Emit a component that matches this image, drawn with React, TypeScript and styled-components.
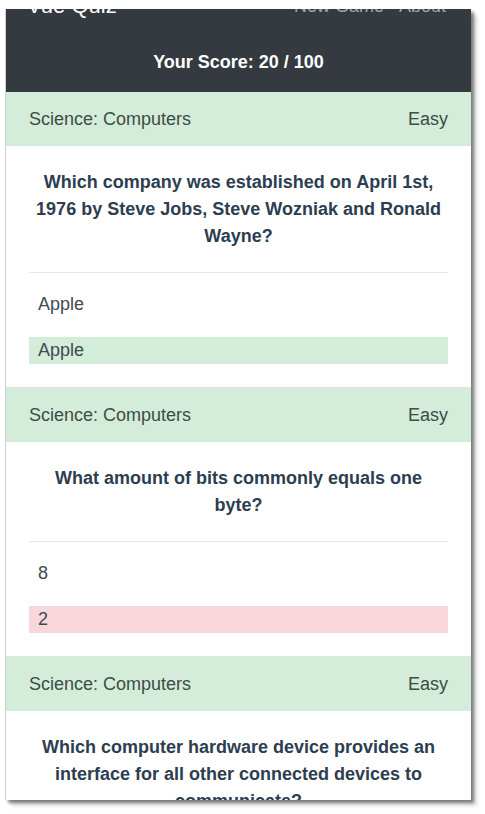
import React from "react";
import styled, { createGlobalStyle } from "styled-components";

const GlobalStyle = createGlobalStyle`
  html, body {
    margin: 0;
    padding: 0;
    background: #ffffff;
    font-family: "Liberation Sans", Arial, sans-serif;
  }
`;

const Page = styled.div`
  width: 485px;
  height: 814px;
  overflow: hidden;
  padding: 9px 0 0 5px;
  box-sizing: border-box;
`;

const Frame = styled.div`
  width: 466px;
  height: 791px;
  overflow: hidden;
  box-sizing: border-box;
  border-left: 1px solid #cfcfcf;
  background: #fff;
  box-shadow: 3px 3px 3px rgba(0, 0, 0, 0.45), 6px 6px 4px rgba(0, 0, 0, 0.12);
  color: #2c3e50;
`;

const Nav = styled.header`
  margin-top: -25px;
  background: #343a40;
`;

const NavRow = styled.div`
  height: 44px;
  display: flex;
  align-items: center;
  justify-content: space-between;
  padding: 0 25px 0 21px;
`;

const Brand = styled.span`
  color: #fff;
  font-size: 22px;
`;

const NavLinks = styled.nav`
  display: flex;
  gap: 15px;
`;

const NavLink = styled.span`
  color: rgba(255, 255, 255, 0.55);
  font-size: 18px;
`;

const Score = styled.div`
  padding: 22px 0 18px;
  line-height: 24px;
  text-align: center;
  color: #fff;
  font-weight: bold;
  font-size: 18px;
`;

const Card = styled.section`
  border-bottom: 1px solid #e2e2e2;
`;

const CardHeader = styled.div`
  height: 54px;
  display: flex;
  align-items: center;
  justify-content: space-between;
  padding: 0 23px 0 23px;
  background: #d4edda;
  color: #3d4c45;
  font-size: 18px;
`;

const CardBody = styled.div`
  padding: 23px 23px 23px;
`;

const Question = styled.h2`
  margin: 0;
  padding: 0 5px;
  text-align: center;
  font-size: 18px;
  line-height: 27px;
  font-weight: bold;
  color: #2c3e50;
`;

const Rule = styled.hr`
  margin: 22px 0 18px;
  border: 0;
  border-top: 1px solid #e6e6e6;
`;

const Answers = styled.div`
  display: flex;
  flex-direction: column;
  gap: 19px;
`;

const Answer = styled.div<{ $tone?: "right" | "wrong" }>`
  height: 27px;
  line-height: 27px;
  padding-left: 9px;
  font-size: 18px;
  color: #3d4a52;
  background: ${(p) =>
    p.$tone === "right" ? "#d4edda" : p.$tone === "wrong" ? "#f8d7da" : "transparent"};
`;

type Item = {
  category: string;
  difficulty: string;
  question: string;
  correct: string;
  given: string;
};

const items: Item[] = [
  {
    category: "Science: Computers",
    difficulty: "Easy",
    question: "Which company was established on April 1st, 1976 by Steve Jobs, Steve Wozniak and Ronald Wayne?",
    correct: "Apple",
    given: "Apple",
  },
  {
    category: "Science: Computers",
    difficulty: "Easy",
    question: "What amount of bits commonly equals one byte?",
    correct: "8",
    given: "2",
  },
  {
    category: "Science: Computers",
    difficulty: "Easy",
    question: "Which computer hardware device provides an interface for all other connected devices to communicate?",
    correct: "Motherboard",
    given: "Motherboard",
  },
];

export default function App() {
  return (
    <Page>
      <GlobalStyle />
      <Frame>
        <Nav>
          <NavRow>
            <Brand>Vue Quiz</Brand>
            <NavLinks>
              <NavLink>New Game</NavLink>
              <NavLink>About</NavLink>
            </NavLinks>
          </NavRow>
          <Score>Your Score: 20 / 100</Score>
        </Nav>
        {items.map((item, i) => (
          <Card key={i}>
            <CardHeader>
              <span>{item.category}</span>
              <span>{item.difficulty}</span>
            </CardHeader>
            <CardBody>
              <Question>{item.question}</Question>
              <Rule />
              <Answers>
                <Answer>{item.correct}</Answer>
                <Answer $tone={item.given === item.correct ? "right" : "wrong"}>{item.given}</Answer>
              </Answers>
            </CardBody>
          </Card>
        ))}
      </Frame>
    </Page>
  );
}
